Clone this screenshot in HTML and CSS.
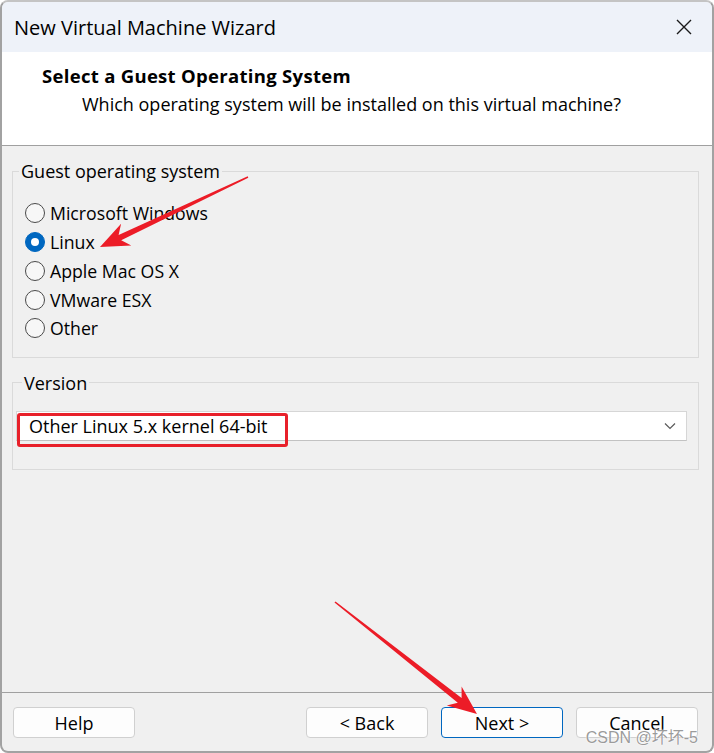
FILE: index.html
```html
<!DOCTYPE html>
<html>
<head>
<meta charset="utf-8">
<link rel="stylesheet" href="styles.css">
</head>
<body>
<div class="window">
  <div class="titlebar">
    <span class="title">New Virtual Machine Wizard</span>
    <svg class="close" width="16" height="16" viewBox="0 0 16 16"><path d="M1 1 L15 15 M15 1 L1 15" stroke="#1a1a1a" stroke-width="1.4" fill="none"/></svg>
  </div>
  <div class="header">
    <div class="heading">Select a Guest Operating System</div>
    <div class="subtitle">Which operating system will be installed on this virtual machine?</div>
  </div>
  <div class="body">
    <fieldset class="group group-os">
      <legend>Guest operating system</legend>
      <div class="radios">
        <label class="radio"><span class="dot"></span>Microsoft Windows</label>
        <label class="radio checked"><span class="dot"></span>Linux</label>
        <label class="radio"><span class="dot"></span>Apple Mac OS X</label>
        <label class="radio"><span class="dot"></span>VMware ESX</label>
        <label class="radio"><span class="dot"></span>Other</label>
      </div>
    </fieldset>
    <fieldset class="group group-ver">
      <legend>Version</legend>
      <div class="combo">
        <span class="combo-text">Other Linux 5.x kernel 64-bit</span>
        <svg class="chev" width="12" height="8" viewBox="0 0 12 8"><path d="M1 1.5 L6 6.5 L11 1.5" stroke="#5a5a5a" stroke-width="1.2" fill="none"/></svg>
        <div class="mark"></div>
      </div>
    </fieldset>
  </div>
  <div class="footer">
    <button class="btn">Help</button>
    <div class="spacer"></div>
    <button class="btn">&lt; Back</button>
    <button class="btn primary">Next &gt;</button>
    <button class="btn">Cancel</button>
  </div>
  <div class="watermark">CSDN @坏坏-5</div>
  <svg class="arrows" width="714" height="753" viewBox="0 0 714 753">
    <polygon fill="#ec1c27" points="248.3,177.7 121.2,240.3 131.3,245.4 100,247 121.1,223.8 118.6,234.9 247.7,176.3"/>
    <polygon fill="#ec1c27" points="334.5,602.6 457.8,702.8 446.8,705.5 477,714 461.6,686.6 461.6,698.0 335.5,601.4"/>
  </svg>
</div>
</body>
</html>
```
FILE: styles.css
```css
* { box-sizing: border-box; }
html, body { margin: 0; padding: 0; background: #ffffff; }
body {
  font-family: "Open Sans", "Liberation Sans", "Noto Sans CJK SC", sans-serif;
  color: #000;
}
.window {
  position: relative;
  width: 714px;
  height: 753px;
  border: 2px solid #a2a2a2;
  border-top-color: #c4c4c4;
  border-radius: 8px;
  overflow: hidden;
  display: flex;
  flex-direction: column;
  background: #f0f0f0;
}
.titlebar {
  height: 50px;
  flex: none;
  background: #eef2f9;
  display: flex;
  align-items: center;
  justify-content: space-between;
  padding: 0 20px 0 12px;
}
.title { font-size: 20px; }
.close { display: block; margin-top: -1px; }
.header {
  height: 94px;
  flex: none;
  background: #ffffff;
  border-bottom: 1px solid #a0a0a0;
  padding: 12px 0 0 40px;
}
.heading { font-weight: 700; font-size: 18.5px; line-height: 24px; letter-spacing: 0.3px; }
.subtitle { font-size: 18px; line-height: 24px; margin-top: 4px; padding-left: 40px; }
.body {
  flex: 1;
  padding: 13px 13px 0 10px;
  display: flex;
  flex-direction: column;
  gap: 13px;
}
.group {
  margin: 0;
  border: 1px solid #dadada;
  padding: 0;
  min-width: 0;
}
.group legend {
  margin-left: 6px;
  padding: 0 2px;
  font-size: 18px;
  line-height: 24px;
}
.radios {
  padding: 16px 0 14px 12px;
  display: flex;
  flex-direction: column;
}
.radio {
  height: 28.75px;
  display: flex;
  align-items: center;
  font-size: 17.7px;
  gap: 5px;
}
.dot {
  width: 20px;
  height: 20px;
  border-radius: 50%;
  border: 1px solid #4a4a4a;
  background: #f7f7f7;
  flex: none;
  display: flex;
  align-items: center;
  justify-content: center;
}
.radio.checked .dot {
  background: #0067c0;
  border-color: #0067c0;
}
.radio.checked .dot::after {
  content: "";
  width: 8px;
  height: 8px;
  border-radius: 50%;
  background: #ffffff;
}
.group-ver { padding: 0 11px 28px 3px; }
.combo {
  position: relative;
  margin-top: 16px;
  height: 30px;
  background: #ffffff;
  border: 1px solid #d6d6d6;
  border-bottom-color: #c2c2c2;
  display: flex;
  align-items: center;
  justify-content: space-between;
  padding: 0 10px 0 12px;
}
.combo-text { font-size: 18px; }
.chev { display: block; }
.mark {
  position: absolute;
  left: 0;
  top: 1px;
  width: 271px;
  height: 34px;
  border: 3px solid #e8202a;
  border-radius: 3px;
}
.footer {
  height: 59px;
  flex: none;
  border-top: 1px solid #a0a0a0;
  display: flex;
  align-items: flex-start;
  padding: 14px 14px 0 11px;
  gap: 13px;
}
.spacer { flex: 1; }
.btn {
  width: 122px;
  height: 31px;
  background: #fdfdfd;
  border: 1px solid #d0d0d0;
  border-radius: 4px;
  font-family: inherit;
  font-size: 18px;
  color: #000;
  padding: 0;
}
.btn.primary { border-color: #0067c0; }
.watermark {
  position: absolute;
  right: 14px;
  bottom: 3px;
  font-family: "Liberation Sans", "Noto Sans CJK SC", sans-serif;
  font-size: 16px;
  color: rgba(110, 110, 110, 0.7);
  text-shadow: 0 0 2px #ffffff, 0 0 1px #ffffff;
}
.arrows {
  position: absolute;
  left: -2px;
  top: -2px;
  pointer-events: none;
}
```
